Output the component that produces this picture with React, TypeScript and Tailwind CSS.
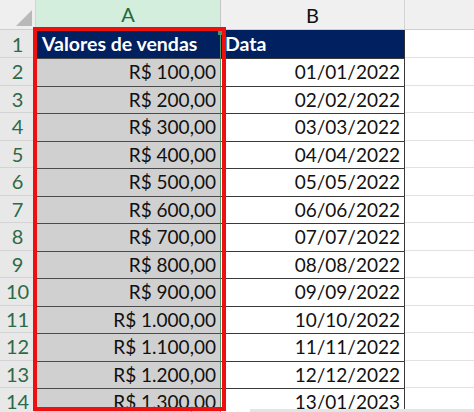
const rows = [
  ["R$ 100,00", "01/01/2022"],
  ["R$ 200,00", "02/02/2022"],
  ["R$ 300,00", "03/03/2022"],
  ["R$ 400,00", "04/04/2022"],
  ["R$ 500,00", "05/05/2022"],
  ["R$ 600,00", "06/06/2022"],
  ["R$ 700,00", "07/07/2022"],
  ["R$ 800,00", "08/08/2022"],
  ["R$ 900,00", "09/09/2022"],
  ["R$ 1.000,00", "10/10/2022"],
  ["R$ 1.100,00", "11/11/2022"],
  ["R$ 1.200,00", "12/12/2022"],
  ["R$ 1.300,00", "13/01/2023"],
];

function RowNum({ n }: { n: number }) {
  return (
    <div className="flex w-[36px] shrink-0 items-center justify-center border-r border-b border-[#d4d4d4] bg-[#e8e8e8] text-[20px] text-[#2d6a48]">
      {n}
    </div>
  );
}

export default function App() {
  return (
    <div className="relative h-[412px] w-[474px] overflow-hidden bg-white font-['Lato','Open_Sans',sans-serif] text-[19px] text-[#111]">
      {/* column headers */}
      <div className="flex h-[30px] border-b border-[#cfcfcf] text-[20px]">
        <div className="relative w-[36px] shrink-0 border-r border-[#d4d4d4] bg-[#efefef]">
          <svg className="absolute right-[3px] bottom-[3px]" width="16" height="16" viewBox="0 0 16 16">
            <path d="M16 0 L16 16 L0 16 Z" fill="#b9b9b9" />
          </svg>
        </div>
        <div className="flex w-[185px] shrink-0 items-center justify-center border-r border-[#c6c6c6] border-b-2 border-b-[#5fa47c] bg-[#d3eedd] text-[#1f6a3e]">
          A
        </div>
        <div className="flex w-[184px] shrink-0 items-center justify-center border-r border-[#d4d4d4] bg-[#f0f0f0]">
          B
        </div>
        <div className="flex-1 bg-[#f0f0f0]" />
      </div>

      {/* header row */}
      <div className="flex h-[28px]">
        <RowNum n={1} />
        <div className="relative flex w-[185px] shrink-0 items-center border-r border-[#4c9a6e] bg-[#002060] pl-[6px] text-[19.5px] font-bold text-white">
          Valores de vendas
          <span className="absolute top-0 right-[-3px] h-[5px] w-[5px] bg-[#3f9b6a]" />
        </div>
        <div className="flex w-[184px] shrink-0 items-center border-r border-[#303030] bg-[#002060] pl-[4px] text-[19.5px] font-bold text-white">
          Data
        </div>
        <div className="flex-1 border-b border-[#e2e2e2]" />
      </div>

      {rows.map(([v, d], i) => (
        <div key={i} className="flex h-[27.5px]">
          <RowNum n={i + 2} />
          <div className="flex w-[185px] shrink-0 items-center justify-end border-t border-r border-t-[#4a4a4a] border-r-[#4c9a6e] bg-[#d0d0d0] pr-[4px]">
            {v}
          </div>
          <div className="flex w-[184px] shrink-0 items-center justify-end border-t border-r border-[#3a3a3a] pr-[4px]">
            {d}
          </div>
          <div className="flex-1 border-b border-[#e2e2e2]" />
        </div>
      ))}

      {/* scrollbar hint */}
      <div className="absolute bottom-0 left-[250px] right-0 h-[3px] bg-[#e4e4e4]" />

      {/* annotation */}
      <div className="pointer-events-none absolute top-[27px] left-[33px] h-[384px] w-[193px] border-[4px] border-[#ee1010]" />
    </div>
  );
}
